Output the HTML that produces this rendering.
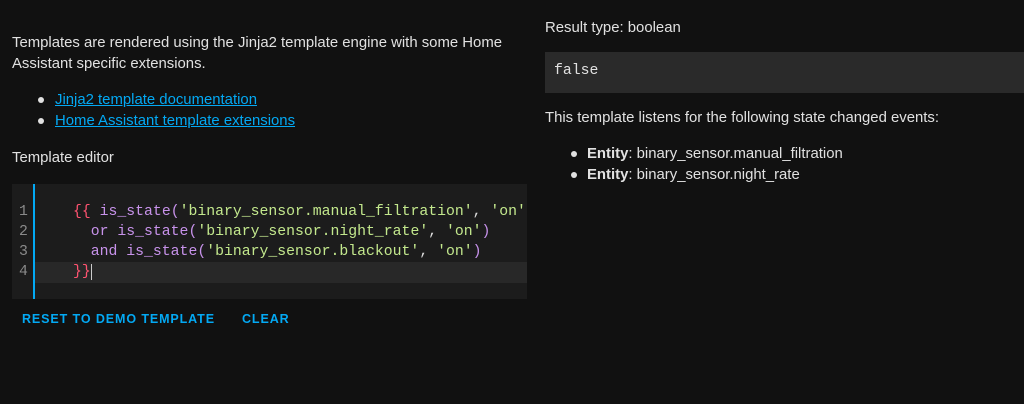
<!DOCTYPE html>
<html><head><style>
body{margin:0;background:#111111;color:#e1e1e1;font-family:"Liberation Sans",sans-serif;font-size:14.9px;width:1024px;height:404px;overflow:hidden;position:relative}
.a{position:absolute;white-space:nowrap}
a{color:#03a9f4;text-decoration:underline}
.mono{font-family:"Liberation Mono",monospace;font-size:14.8px}
.ln{color:#8a8a8a}
.p{color:#c792ea}.s{color:#c3e88d}.r{color:#ff5370}.w{color:#ddd}
.dot{position:absolute;width:6px;height:6px;border-radius:50%;background:#e1e1e1}
.btn{color:#03a9f4;font-weight:bold;font-size:12.5px;letter-spacing:0.9px}
</style></head><body>
<div class="a" style="left:12px;top:35px">Templates are rendered using the Jinja2 template engine with some Home</div>
<div class="a" style="left:12px;top:56px">Assistant specific extensions.</div>
<div class="dot" style="left:38px;top:97px"></div>
<div class="a" style="left:55px;top:92px"><a>Jinja2 template documentation</a></div>
<div class="dot" style="left:38px;top:118px"></div>
<div class="a" style="left:55px;top:113px"><a>Home Assistant template extensions</a></div>
<div class="a" style="left:12px;top:150px">Template editor</div>

<div style="position:absolute;left:12px;top:184px;width:515px;height:115px;background:#1c1c1c"></div>
<div style="position:absolute;left:33px;top:184px;width:2px;height:115px;background:#03a9f4"></div>
<div style="position:absolute;left:35px;top:262px;width:492px;height:21px;background:#282828"></div>
<div class="a mono ln" style="left:19px;top:202px;line-height:20px">1<br>2<br>3<br>4</div>
<div class="a mono" style="left:73px;top:202px;line-height:20px;width:454px;overflow:hidden">
<span class="r">{{</span> <span class="p">is_state(</span><span class="s">'binary_sensor.manual_filtration'</span><span class="w">, </span><span class="s">'on'</span><br>
&nbsp;&nbsp;<span class="p">or is_state(</span><span class="s">'binary_sensor.night_rate'</span><span class="w">, </span><span class="s">'on'</span><span class="p">)</span><br>
&nbsp;&nbsp;<span class="p">and is_state(</span><span class="s">'binary_sensor.blackout'</span><span class="w">, </span><span class="s">'on'</span><span class="p">)</span><br>
<span class="r">}}</span><span style="border-left:1px solid #ccc"></span>
</div>
<div class="a btn" style="left:22px;top:312px">RESET TO DEMO TEMPLATE</div>
<div class="a btn" style="left:242px;top:312px">CLEAR</div>

<div class="a" style="left:545px;top:20px">Result type: boolean</div>
<div style="position:absolute;left:545px;top:52px;width:479px;height:41px;background:#2a2a2a"></div>
<div class="a mono" style="left:554px;top:63px;color:#e1e1e1">false</div>
<div class="a" style="left:545px;top:110px">This template listens for the following state changed events:</div>
<div class="dot" style="left:571px;top:151px"></div>
<div class="a" style="left:587px;top:146px"><b>Entity</b>: binary_sensor.manual_filtration</div>
<div class="dot" style="left:571px;top:172px"></div>
<div class="a" style="left:587px;top:167px"><b>Entity</b>: binary_sensor.night_rate</div>
</body></html>
